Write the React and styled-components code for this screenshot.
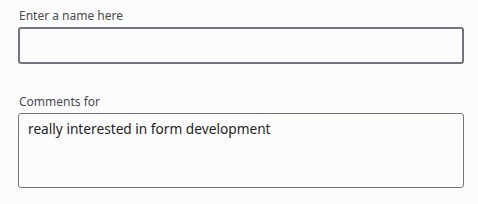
import React from "react";
import styled, { createGlobalStyle } from "styled-components";

const Global = createGlobalStyle`
  html, body { margin: 0; padding: 0; background: #fdfcfd; }
  body { font-family: "Noto Sans", "Open Sans", sans-serif; }
`;

const Form = styled.form`
  display: flex;
  flex-direction: column;
  gap: 30px;
  padding: 8px 14px 0 18px;
  width: 446px;
`;

const Field = styled.div`
  display: flex;
  flex-direction: column;
  gap: 4px;
`;

const Label = styled.label`
  font-size: 12px;
  line-height: 15px;
  color: #4a4a52;
  padding-left: 1px;
`;

const TextInput = styled.input`
  box-sizing: border-box;
  width: 100%;
  height: 37px;
  border: 2px solid #74747e;
  border-radius: 3px;
  background: #fdfcfd;
  outline: none;
  font: inherit;
  font-size: 14px;
  padding: 0 9px;
`;

const TextArea = styled.textarea`
  box-sizing: border-box;
  width: 100%;
  height: 75px;
  border: 1px solid #74747e;
  border-radius: 3px;
  background: #fdfcfd;
  outline: none;
  resize: none;
  font: inherit;
  font-size: 13.7px;
  line-height: 20px;
  color: #1f1f24;
  padding: 5px 9px;
  display: block;
`;

export default function App() {
  return (
    <>
      <Global />
      <Form>
        <Field>
          <Label>Enter a name here</Label>
          <TextInput type="text" />
        </Field>
        <Field>
          <Label>Comments for</Label>
          <TextArea defaultValue="really interested in form development" />
        </Field>
      </Form>
    </>
  );
}
